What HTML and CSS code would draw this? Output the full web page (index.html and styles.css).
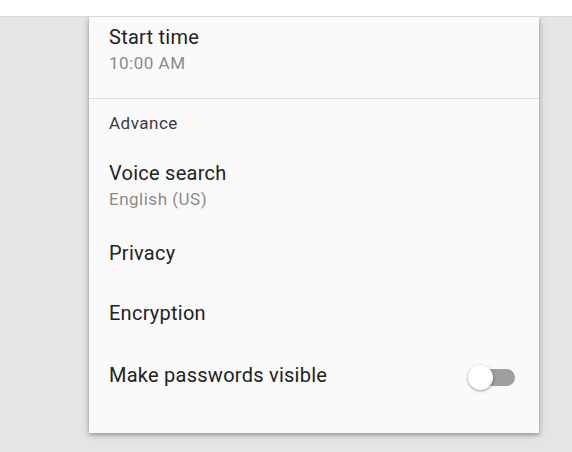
FILE: index.html
```html
<!DOCTYPE html>
<html lang="en">
<head>
<meta charset="utf-8">
<title>Settings</title>
<link rel="stylesheet" href="styles.css">
</head>
<body>
<header class="topbar"></header>
<main class="card">
  <div class="item item-two first">
    <div class="title">Start time</div>
    <div class="sub">10:00 AM</div>
  </div>
  <div class="divider"></div>
  <div class="subheader">Advance</div>
  <div class="item item-two">
    <div class="title">Voice search</div>
    <div class="sub">English (US)</div>
  </div>
  <div class="item item-one">
    <div class="title">Privacy</div>
  </div>
  <div class="item item-one">
    <div class="title">Encryption</div>
  </div>
  <div class="item item-one item-switch">
    <div class="title">Make passwords visible</div>
    <div class="switch" role="switch" aria-checked="false">
      <span class="track"></span>
      <span class="thumb"></span>
    </div>
  </div>
</main>
</body>
</html>
```

FILE: styles.css
```css
html, body {
  margin: 0;
  padding: 0;
}
body {
  background: #e5e5e5;
  font-family: Roboto, "Noto Sans", "Liberation Sans", sans-serif;
  height: 452px;
  overflow: hidden;
}
.topbar {
  height: 16px;
  background: #ffffff;
  border-bottom: 1px solid #d9d9d9;
  position: relative;
  z-index: 2;
}
.card {
  margin-left: 89px;
  width: 450px;
  background: #fafafa;
  box-shadow: 0 2px 4px rgba(0,0,0,0.28), 0 1px 10px rgba(0,0,0,0.14);
  padding-bottom: 25px;
  position: relative;
  z-index: 1;
}
.item {
  display: flex;
  flex-direction: column;
  padding: 0 24px 0 20px;
}
.item-two {
  padding-top: 18px;
  padding-bottom: 14.3px;
}
.item-two.first {
  padding-top: 7.5px;
  padding-bottom: 25.5px;
}
.item-one {
  padding-top: 18px;
  padding-bottom: 18px;
}
.title {
  font-size: 20px;
  line-height: 24px;
  color: #222222;
  letter-spacing: 0.25px;
}
.sub {
  font-size: 17px;
  line-height: 20px;
  color: #8a8a8a;
  margin-top: 4px;
  letter-spacing: 0.5px;
}
.divider {
  height: 1px;
  background: #dcdcdc;
}
.subheader {
  font-size: 17px;
  line-height: 20px;
  color: #3c3c3c;
  letter-spacing: 0.5px;
  padding: 13.5px 20px 10px;
}
.item-switch {
  flex-direction: row;
  align-items: center;
  justify-content: space-between;
}
.switch {
  position: relative;
  width: 47px;
  height: 25px;
  margin-top: 4px;
}
.track {
  position: absolute;
  right: 0;
  top: 4px;
  width: 42px;
  height: 17px;
  border-radius: 9px;
  background: #9e9e9e;
}
.thumb {
  position: absolute;
  left: 0;
  top: 0;
  width: 25px;
  height: 25px;
  border-radius: 50%;
  background: #ffffff;
  box-shadow: 0 1px 3px rgba(0,0,0,0.4);
}
```
